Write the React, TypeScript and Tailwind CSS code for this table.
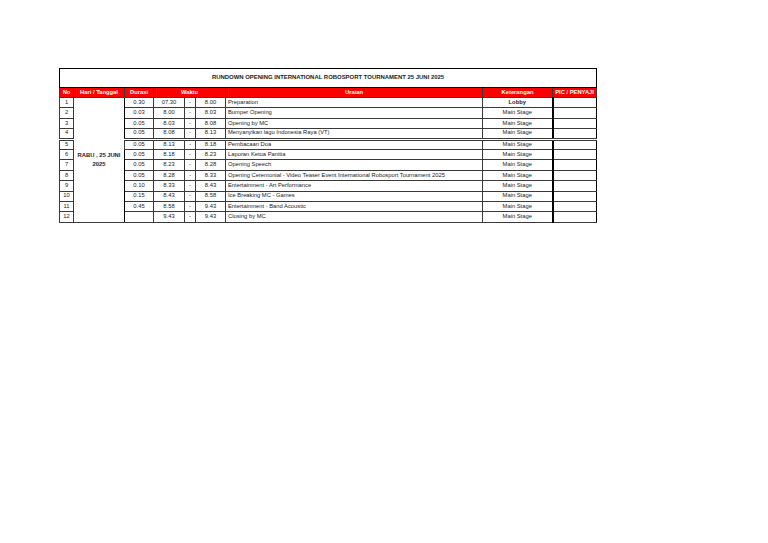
import React from 'react';

type Row = {
  no: string;
  durasi: string;
  mulai: string;
  selesai: string;
  uraian: string;
  ket: string;
};

const rows: Row[] = [
  { no: '1', durasi: '0.30', mulai: '07.30', selesai: '8.00', uraian: 'Preparation', ket: 'Lobby' },
  { no: '2', durasi: '0.03', mulai: '8.00', selesai: '8.03', uraian: 'Bumper Opening', ket: 'Main Stage' },
  { no: '3', durasi: '0.05', mulai: '8.03', selesai: '8.08', uraian: 'Opening by MC', ket: 'Main Stage' },
  { no: '4', durasi: '0.05', mulai: '8.08', selesai: '8.13', uraian: 'Menyanyikan lagu Indonesia Raya (VT)', ket: 'Main Stage' },
  { no: '5', durasi: '0.05', mulai: '8.13', selesai: '8.18', uraian: 'Pembacaan Doa', ket: 'Main Stage' },
  { no: '6', durasi: '0.05', mulai: '8.18', selesai: '8.23', uraian: 'Laporan Ketua Panitia', ket: 'Main Stage' },
  { no: '7', durasi: '0.05', mulai: '8.23', selesai: '8.28', uraian: 'Opening Speech', ket: 'Main Stage' },
  { no: '8', durasi: '0.05', mulai: '8.28', selesai: '8.33', uraian: 'Opening Ceremonial - Video Teaser Event International Robosport Tournament 2025', ket: 'Main Stage' },
  { no: '9', durasi: '0.10', mulai: '8.33', selesai: '8.43', uraian: 'Entertainment - Art Performance', ket: 'Main Stage' },
  { no: '10', durasi: '0.15', mulai: '8.43', selesai: '8.58', uraian: 'Ice Breaking MC - Games', ket: 'Main Stage' },
  { no: '11', durasi: '0.45', mulai: '8.58', selesai: '9.43', uraian: 'Entertainment - Band Acoustic', ket: 'Main Stage' },
  { no: '12', durasi: '', mulai: '9.43', selesai: '9.43', uraian: 'Closing by MC', ket: 'Main Stage' },
];

const cell = 'border border-[#3a3a3a] p-0 h-[10.4px] leading-none';
const head = 'border border-[#3a3a3a] p-0 h-[10px] leading-none bg-[#ff0000] text-white text-center font-bold';

export default function App() {
  return (
    <div className="min-h-screen bg-white pt-[68px] pl-[59px] text-[#222]" style={{ fontFamily: '"Liberation Sans", Arial, sans-serif' }}>
      <table className="table-fixed border-collapse w-[537px] text-[5.8px]">
        <colgroup>
          <col className="w-[14px]" />
          <col className="w-[51px]" />
          <col className="w-[29px]" />
          <col className="w-[31px]" />
          <col className="w-[11px]" />
          <col className="w-[30px]" />
          <col className="w-[257px]" />
          <col className="w-[70px]" />
          <col className="w-[44px]" />
        </colgroup>
        <tbody>
          <tr>
            <td colSpan={9} className="border border-black p-0 h-[19px] text-center font-bold text-[5.95px] leading-none">
              RUNDOWN OPENING INTERNATIONAL ROBOSPORT TOURNAMENT 25 JUNI 2025
            </td>
          </tr>
          <tr>
            <td className={head}>No</td>
            <td className={head}>Hari / Tanggal</td>
            <td className={head}>Durasi</td>
            <td colSpan={3} className={head}>Waktu</td>
            <td className={head}>Uraian</td>
            <td className={head}>Keterangan</td>
            <td className={head}>PIC / PENYAJI</td>
          </tr>
          {rows.map((r, i) => {
            const top = i === 4 ? ' border-t-[3px] border-t-[#3a3a3a] border-double' : '';
            return (
              <tr key={i}>
                <td className={`${cell} text-center${top}`}>{r.no}</td>
                {i === 0 && (
                  <td rowSpan={12} className="border border-[#3a3a3a] border-r-black p-0 text-center font-bold leading-[1.6]">
                    RABU , 25 JUNI
                    <br />
                    2025
                  </td>
                )}
                <td className={`${cell} text-center${top}`}>{r.durasi}</td>
                <td className={`${cell} text-center${top}`}>{r.mulai}</td>
                <td className={`${cell} text-center${top}`}>-</td>
                <td className={`${cell} text-center${top}`}>{r.selesai}</td>
                <td className={`${cell} text-left pl-[2px] border-l-black${top}`}>{r.uraian}</td>
                <td className={`${cell} text-center${i === 0 ? ' font-bold' : ''}${top}`}>{r.ket}</td>
                <td className={`${cell} border-l-black border-l-2 border-r-black${top}`}></td>
              </tr>
            );
          })}
        </tbody>
      </table>
    </div>
  );
}
